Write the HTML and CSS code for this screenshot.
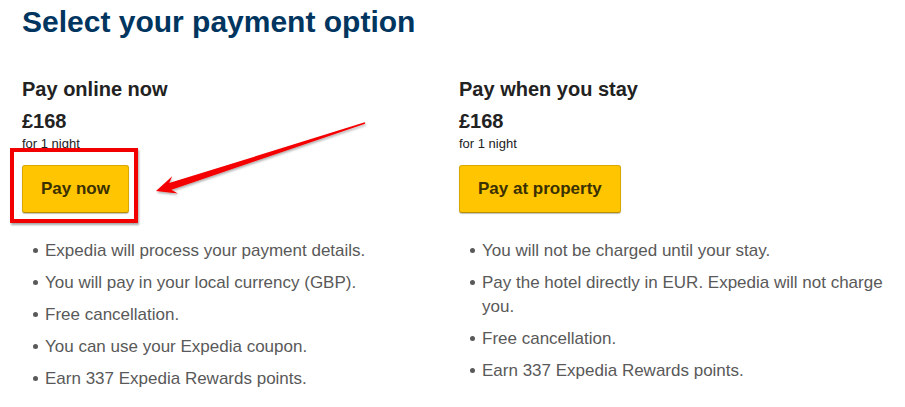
FILE: index.html
```html
<!DOCTYPE html>
<html lang="en">
<head>
<meta charset="utf-8">
<title>Select your payment option</title>
<link rel="stylesheet" href="styles.css">
</head>
<body>
<main class="page">
  <h1 class="title">Select your payment option</h1>
  <div class="options">
    <section class="option">
      <h2 class="option-title">Pay online now</h2>
      <div class="price">£168</div>
      <div class="per">for 1 night</div>
      <button class="btn" type="button">Pay now</button>
      <ul class="perks">
        <li>Expedia will process your payment details.</li>
        <li>You will pay in your local currency (GBP).</li>
        <li>Free cancellation.</li>
        <li>You can use your Expedia coupon.</li>
        <li>Earn 337 Expedia Rewards points.</li>
      </ul>
    </section>
    <section class="option">
      <h2 class="option-title">Pay when you stay</h2>
      <div class="price">£168</div>
      <div class="per">for 1 night</div>
      <button class="btn" type="button">Pay at property</button>
      <ul class="perks">
        <li>You will not be charged until your stay.</li>
        <li>Pay the hotel directly in EUR. Expedia will not charge you.</li>
        <li>Free cancellation.</li>
        <li>Earn 337 Expedia Rewards points.</li>
      </ul>
    </section>
  </div>
  <div class="highlight"></div>
  <svg class="arrow" width="905" height="407" viewBox="0 0 905 407" aria-hidden="true">
    <defs>
      <filter id="sh" x="-10%" y="-10%" width="120%" height="130%">
        <feDropShadow dx="0.8" dy="1.5" stdDeviation="1" flood-color="#000" flood-opacity="0.35"/>
      </filter>
    </defs>
    <polygon filter="url(#sh)" fill="#f50000" points="156,191 172.2,176.2 169.2,183.1 364.8,122.3 365.2,123.7 171.4,189.7 177.8,193.4"/>
  </svg>
</main>
</body>
</html>
```

FILE: styles.css
```css
* { box-sizing: border-box; }
html, body { margin: 0; padding: 0; background: #fff; }
body {
  font-family: "Liberation Sans", Arial, Helvetica, sans-serif;
  width: 905px;
  height: 407px;
  overflow: hidden;
}
.page {
  position: relative;
  padding: 4px 0 0 22px;
  height: 407px;
}
.title {
  margin: 0;
  font-size: 30px;
  line-height: 36px;
  font-weight: 700;
  color: #00355f;
}
.options {
  margin-top: 37px;
  display: grid;
  grid-template-columns: 437px 437px;
}
.option-title {
  margin: 0;
  font-size: 20px;
  line-height: 24px;
  font-weight: 700;
  color: #222;
}
.price {
  margin-top: 8px;
  font-size: 20px;
  line-height: 24px;
  font-weight: 700;
  color: #222;
}
.per {
  margin-top: 3px;
  font-size: 13px;
  line-height: 16px;
  color: #222;
}
.btn {
  display: block;
  margin-top: 13px;
  height: 48px;
  padding: 0 18px;
  font-family: inherit;
  font-size: 17px;
  font-weight: 700;
  color: #3a3000;
  background: #ffc500;
  border: 1px solid #d9a800;
  border-bottom-color: #b98f00;
  border-radius: 3px;
  box-shadow: 0 1px 1px rgba(0,0,0,0.25);
}
.perks {
  list-style: none;
  margin: 26px 0 0;
  padding: 0 0 0 11px;
  font-size: 17px;
  line-height: 24px;
  color: #595959;
}
.perks li {
  display: flex;
  margin-bottom: 8px;
}
.perks li::before {
  content: "";
  flex: 0 0 5px;
  width: 5px;
  height: 5px;
  margin: 9px 7px 0 0;
  border-radius: 50%;
  background: #595959;
}
.highlight {
  position: absolute;
  left: 10px;
  top: 148px;
  width: 128px;
  height: 75px;
  border: 4px solid #f20000;
  box-shadow: 1px 2px 2px rgba(0,0,0,0.35);
}
.arrow {
  position: absolute;
  left: 0;
  top: 0;
  pointer-events: none;
}
```
